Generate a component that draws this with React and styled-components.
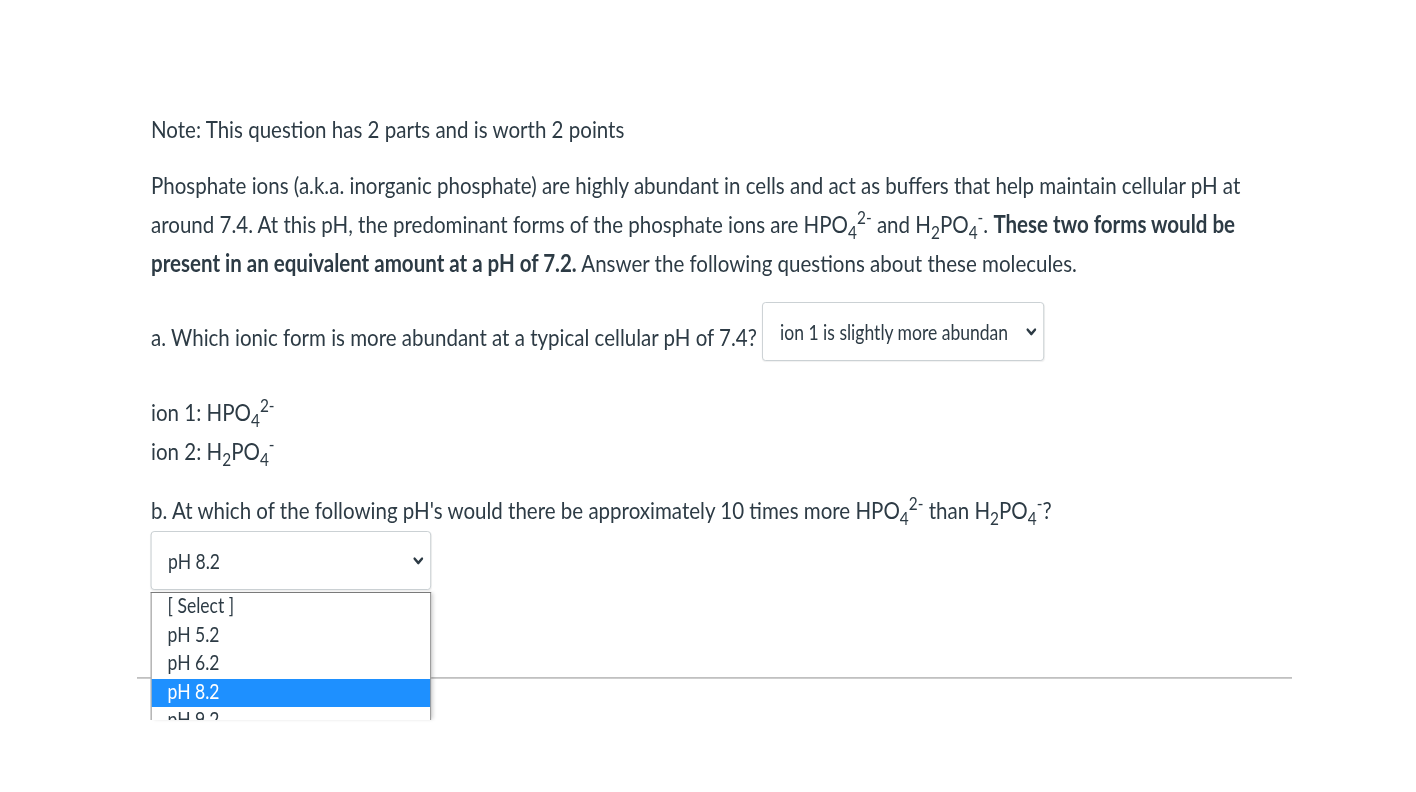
import React from "react";
import styled, { createGlobalStyle } from "styled-components";

const GlobalStyle = createGlobalStyle`
  html { overflow: hidden; background: #ffffff; }
  body {
    margin: 0;
    padding: 0;
    min-height: 792px;
    background: #ffffff;
    font-family: Lato, "Open Sans", sans-serif;
    color: #2d3b45;
  }
`;

const Stage = styled.div`
  width: 1351px;
  margin-left: 137px;
  padding-top: 109px;
  transform: scaleX(0.855);
  transform-origin: 0 0;
`;

const Content = styled.div`
  padding: 0 16.4px;
  font-size: 24px;
  line-height: 39px;
`;

const Para = styled.p`
  margin: ${p => p.$mt || 0}px 0 0;
`;

const Bold = styled.strong`
  font-weight: 700;
`;

const Sub = styled.sub`
  font-size: 75%;
  line-height: 0;
  vertical-align: sub;
`;

const Sup = styled.sup`
  font-size: 75%;
  line-height: 0;
  vertical-align: super;
`;

const QuestionRow = styled.div`
  display: flex;
  align-items: flex-start;
  gap: 6px;
  margin-top: ${p => p.$mt || 0}px;
`;

const Label = styled.span`
  padding-top: 15px;
  white-space: nowrap;
`;

const SelectWrap = styled.div`
  position: relative;
  width: ${p => p.$w}px;
  margin-top: ${p => p.$mt || 0}px;
`;

const SelectBox = styled.div`
  display: flex;
  align-items: center;
  box-sizing: border-box;
  height: 59px;
  padding: 0 8px 0 ${p => p.$pl}px;
  border: 1px solid #c7cdd1;
  border-radius: 4px;
  background: #fff;
  box-shadow: 0 1px 1px rgba(0, 0, 0, 0.06);
  font-size: 20.5px;
  line-height: 24px;
`;

const SelectText = styled.span`
  flex: 1;
  overflow: hidden;
  white-space: nowrap;
`;

const Chevron = styled.svg`
  flex: none;
  width: 12px;
  height: 8px;
  margin-left: 22px;
`;

const DropList = styled.ul`
  position: absolute;
  top: calc(100% + 2px);
  left: 0;
  right: 0;
  height: 128px;
  margin: 0;
  padding: 0;
  list-style: none;
  box-sizing: border-box;
  overflow: hidden;
  background: #fff;
  border: 1px solid #7a7a7a;
  border-bottom: none;
  box-shadow: 3px 0 4px -1px rgba(0, 0, 0, 0.18);
  z-index: 2;
`;

const Option = styled.li`
  box-sizing: border-box;
  height: 28.5px;
  padding: 0 0 0 18.4px;
  font-size: 20.5px;
  line-height: 24px;
  white-space: nowrap;
  background: ${p => (p.$active ? "#1e90ff" : "transparent")};
  color: ${p => (p.$active ? "#ffffff" : "#2d3b45")};
`;

const Divider = styled.hr`
  margin: 87px 0 0;
  border: none;
  height: 2px;
  background: linear-gradient(#b9b9b9, #d4d4d4);
`;

const ChevronIcon = () => (
  <Chevron viewBox="0 0 12 8" aria-hidden="true">
    <path d="M1.6 1.6 L6 6 L10.4 1.6" fill="none" stroke="#2d3b45" strokeWidth="2.7" strokeLinecap="round" strokeLinejoin="round" />
  </Chevron>
);

const Select = ({ value, width, pl, mt, children }) => (
  <SelectWrap $w={width} $mt={mt}>
    <SelectBox $pl={pl}>
      <SelectText>{value}</SelectText>
      <ChevronIcon />
    </SelectBox>
    {children}
  </SelectWrap>
);

const HPO4 = () => (
  <>HPO<Sub>4</Sub><Sup>2-</Sup></>
);
const H2PO4 = () => (
  <>H<Sub>2</Sub>PO<Sub>4</Sub><Sup>-</Sup></>
);

const options = ["[ Select ]", "pH 5.2", "pH 6.2", "pH 8.2", "pH 9.2"];

export default function App() {
  return (
    <>
      <GlobalStyle />
      <Stage>
        <Content>
          <Para>Note: This question has 2 parts and is worth 2 points</Para>
          <Para $mt={17}>
            Phosphate ions (a.k.a. inorganic phosphate) are highly abundant in cells and act as buffers that help
            maintain cellular pH at around 7.4. At this pH, the predominant forms of the phosphate ions are{" "}
            <HPO4 /> and <H2PO4 />. <Bold>These two forms would be present in an equivalent amount at a pH of 7.2.</Bold>{" "}
            Answer the following questions about these molecules.
          </Para>
          <QuestionRow $mt={20}>
            <Label>a. Which ionic form is more abundant at a typical cellular pH of 7.4?</Label>
            <Select value="ion 1 is slightly more abundant" width={330} pl={20} />
          </QuestionRow>
          <Para $mt={31}>
            ion 1: <HPO4 />
            <br />
            ion 2: <H2PO4 />
          </Para>
          <Para $mt={20}>
            b. At which of the following pH's would there be approximately 10 times more <HPO4 /> than <H2PO4 />?
          </Para>
          <Select value="pH 8.2" width={327.5} pl={19} mt={2}>
            <DropList>
              {options.map(o => (
                <Option key={o} $active={o === "pH 8.2"}>{o}</Option>
              ))}
            </DropList>
          </Select>
        </Content>
        <Divider />
      </Stage>
    </>
  );
}
